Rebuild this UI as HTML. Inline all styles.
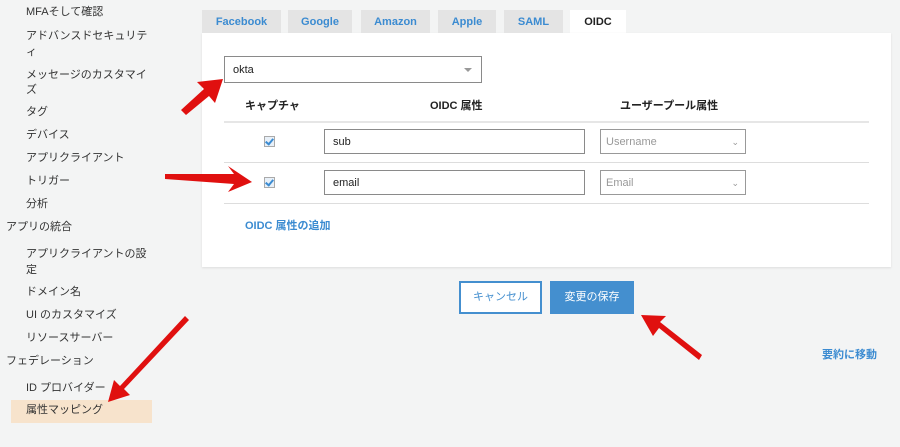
<!DOCTYPE html>
<html><head><meta charset="utf-8"><style>
body{margin:0;width:900px;height:447px;background:#f3f4f4;font-family:"Liberation Sans","Noto Sans CJK JP",sans-serif;position:relative;overflow:hidden;color:#222}
.a{position:absolute;white-space:nowrap}
.s{font-size:11px;color:#333;line-height:14px}
.tab{position:absolute;top:10px;height:23px;background:#e4e4e4;color:#3b8bd1;font-weight:bold;font-size:11px;text-align:center;line-height:25px}
.box{position:absolute;background:#fff;border:1px solid #8a8a8a;box-sizing:border-box;font-size:11px;padding-left:8px}
.hr{position:absolute;left:224px;width:645px;height:1px;background:#ddd}
.cb{position:absolute;width:11px;height:11px;border:1px solid #aaa;background:#e8f0f8;box-sizing:border-box}
.cb:after{content:"";position:absolute;left:2px;top:0px;width:3px;height:6px;border:solid #3b8bd1;border-width:0 2px 2px 0;transform:rotate(40deg)}
</style></head><body>
<div class="a s" style="left:26px;top:5px">MFAそして確認</div>
<div class="a s" style="left:26px;top:29px">アドバンスドセキュリテ</div>
<div class="a s" style="left:26px;top:45px">ィ</div>
<div class="a s" style="left:26px;top:68px">メッセージのカスタマイ</div>
<div class="a s" style="left:26px;top:83px">ズ</div>
<div class="a s" style="left:26px;top:105px">タグ</div>
<div class="a s" style="left:26px;top:128px">デバイス</div>
<div class="a s" style="left:26px;top:151px">アプリクライアント</div>
<div class="a s" style="left:26px;top:174px">トリガー</div>
<div class="a s" style="left:26px;top:197px">分析</div>
<div class="a s" style="left:6px;top:220px">アプリの統合</div>
<div class="a s" style="left:26px;top:247px">アプリクライアントの設</div>
<div class="a s" style="left:26px;top:263px">定</div>
<div class="a s" style="left:26px;top:285px">ドメイン名</div>
<div class="a s" style="left:26px;top:308px">UI のカスタマイズ</div>
<div class="a s" style="left:26px;top:331px">リソースサーバー</div>
<div class="a s" style="left:6px;top:354px">フェデレーション</div>
<div class="a s" style="left:26px;top:381px">ID プロバイダー</div>
<div class="a" style="left:11px;top:400px;width:141px;height:23px;background:#f7e3cc"></div>
<div class="a s" style="left:26px;top:403px">属性マッピング</div>

<div class="tab" style="left:202px;width:79px">Facebook</div>
<div class="tab" style="left:288px;width:64px">Google</div>
<div class="tab" style="left:361px;width:69px">Amazon</div>
<div class="tab" style="left:438px;width:58px">Apple</div>
<div class="tab" style="left:504px;width:59px">SAML</div>
<div class="tab" style="left:570px;width:56px;background:#fff;color:#222">OIDC</div>
<div class="a" style="left:202px;top:33px;width:689px;height:234px;background:#fff;box-shadow:0 1px 2px #ddd"></div>

<div class="box" style="left:224px;top:56px;width:258px;height:27px;line-height:27px">okta<span style="position:absolute;right:9px;top:11px;border:4px solid transparent;border-top:4px solid #999"></span></div>
<div class="a" style="left:245px;top:97px;font-size:11px;font-weight:bold">キャプチャ</div>
<div class="a" style="left:430px;top:97px;font-size:11px;font-weight:bold">OIDC 属性</div>
<div class="a" style="left:620px;top:97px;font-size:11px;font-weight:bold">ユーザープール属性</div>
<div class="hr" style="top:121px;height:2px;background:#e6e6e6"></div>
<div class="cb" style="left:264px;top:136px"></div>
<div class="box" style="left:324px;top:129px;width:261px;height:25px;line-height:25px">sub</div>
<div class="box" style="left:600px;top:129px;width:146px;height:25px;line-height:25px;color:#999;border-color:#999;padding-left:5px">Username<span style="position:absolute;right:6px;top:0;font-size:9px">⌄</span></div>
<div class="hr" style="top:162px"></div>
<div class="cb" style="left:264px;top:177px"></div>
<div class="box" style="left:324px;top:170px;width:261px;height:25px;line-height:25px">email</div>
<div class="box" style="left:600px;top:170px;width:146px;height:25px;line-height:25px;color:#999;border-color:#999;padding-left:5px">Email<span style="position:absolute;right:6px;top:0;font-size:9px">⌄</span></div>
<div class="hr" style="top:203px"></div>
<div class="a" style="left:245px;top:217px;font-size:11px;font-weight:bold;color:#3b8bd1">OIDC 属性の追加</div>

<div class="a" style="left:459px;top:281px;width:83px;height:33px;border:2px solid #448fcf;box-sizing:border-box;background:#fff;color:#448fcf;font-size:11px;text-align:center;line-height:29px">キャンセル</div>
<div class="a" style="left:550px;top:281px;width:84px;height:33px;background:#448fcf;color:#fff;font-size:11px;text-align:center;line-height:33px">変更の保存</div>
<div class="a" style="left:822px;top:346px;font-size:11px;font-weight:bold;color:#3b8bd1">要約に移動</div>

<svg class="a" style="left:0;top:0" width="900" height="447">
<g fill="#e0100f">
<polygon points="181,110 204,89 197,82 223,79 215,103 209,96 186,115"/>
<polygon points="165,174 234,174 228,166 252,182 228,192 234,184 165,179"/>
<polygon points="185,316 120,386 114,380 108,402 130,395 124,389 189,320"/>
<polygon points="699,360 659,328 653,336 641,315 666,316 660,322 702,355"/>
</g></svg>
</body></html>
